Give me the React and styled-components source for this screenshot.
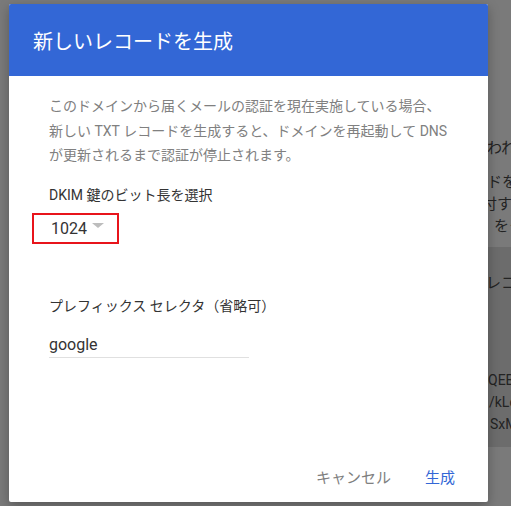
import React from "react";
import styled, { createGlobalStyle } from "styled-components";

const Global = createGlobalStyle`
  html, body { margin: 0; padding: 0; }
  body {
    width: 511px;
    height: 506px;
    overflow: hidden;
    font-family: Roboto, "Noto Sans CJK JP", sans-serif;
  }
`;

const Page = styled.div`
  position: relative;
  width: 511px;
  height: 506px;
  background: #ffffff;
  overflow: hidden;
`;

const Backdrop = styled.div`
  display: flex;
  flex-direction: column;
  margin-left: 470px;
  padding-top: 137px;
  color: #4a4a4a;
  font-size: 15px;
  white-space: nowrap;
`;

const BgLine = styled.div`
  line-height: 22px;
  padding-left: ${(p) => p.$indent}px;
`;

const BgParagraph = styled.div`
  margin-top: 12px;
`;

const BgCard = styled.div`
  margin-top: 10px;
  height: 200px;
  box-sizing: border-box;
  padding-top: 25px;
  background: #e2e2e2;
`;

const KeyBlock = styled.div`
  margin-top: 75px;
  font-size: 14px;
  line-height: 17px;
`;

const Overlay = styled.div`
  position: absolute;
  inset: 0;
  display: flex;
  box-sizing: border-box;
  padding: 4px 23px 4px 9px;
  background: rgba(0, 0, 0, 0.52);
`;

const Dialog = styled.div`
  flex: 1;
  display: flex;
  flex-direction: column;
  background: #ffffff;
  border-radius: 2px;
  overflow: hidden;
  box-shadow: 0 4px 12px rgba(0, 0, 0, 0.28);
`;

const Header = styled.div`
  height: 72px;
  flex: none;
  display: flex;
  align-items: center;
  padding: 0 24px;
  background: #3367d6;
  color: #ffffff;
  font-size: 20px;
  font-weight: 400;
`;

const Body = styled.div`
  display: flex;
  flex-direction: column;
  align-items: flex-start;
  padding: 18px 40px 0 40px;
`;

const Description = styled.p`
  margin: 0;
  font-size: 14px;
  line-height: 24.5px;
  color: #808080;
`;

const Label = styled.div`
  margin-top: ${(p) => p.$top}px;
  font-size: 14px;
  line-height: 20px;
  color: #333333;
`;

const Highlight = styled.div`
  margin-top: 8px;
  margin-left: -17px;
  width: 87px;
  height: 31px;
  box-sizing: border-box;
  border: 2px solid #e8141b;
  display: flex;
  align-items: center;
  padding-left: 17px;
`;

const SelectValue = styled.span`
  font-size: 16px;
  color: #333333;
`;

const Caret = styled.span`
  margin-left: 5px;
  margin-bottom: 6px;
  width: 0;
  height: 0;
  border-left: 6px solid transparent;
  border-right: 6px solid transparent;
  border-top: 5px solid #bdbdbd;
`;

const TextInput = styled.input`
  margin-top: 18px;
  width: 200px;
  height: 21px;
  box-sizing: content-box;
  padding: 0 0 2px 0;
  border: none;
  border-bottom: 1px solid #e0e0e0;
  outline: none;
  font-family: Roboto, "Noto Sans CJK JP", sans-serif;
  font-size: 16px;
  color: #333333;
  background: transparent;
`;

const Footer = styled.div`
  margin-top: auto;
  display: flex;
  justify-content: flex-end;
  gap: 18px;
  padding: 0 25px 8px 0;
`;

const Button = styled.button`
  height: 36px;
  padding: 0 8px;
  border: none;
  background: transparent;
  font-family: Roboto, "Noto Sans CJK JP", sans-serif;
  font-size: 15px;
  color: ${(p) => (p.$primary ? "#3367d6" : "#808080")};
  cursor: pointer;
`;

export default function App() {
  return (
    <>
      <Global />
      <Page>
        <Backdrop>
          <BgLine $indent={17}>われています</BgLine>
          <BgParagraph>
            <BgLine $indent={17}>ドを追加</BgLine>
            <BgLine $indent={12}>付すると</BgLine>
            <BgLine $indent={24}>をクリック</BgLine>
          </BgParagraph>
          <BgCard>
            <BgLine $indent={16}>レコード</BgLine>
            <KeyBlock>
              <BgLine $indent={18}>QEBAQUAA</BgLine>
              <BgLine $indent={19}>/kLcWq</BgLine>
              <BgLine $indent={20}>SxMpTe</BgLine>
            </KeyBlock>
          </BgCard>
        </Backdrop>
        <Overlay>
          <Dialog>
            <Header>新しいレコードを生成</Header>
            <Body>
              <Description>
                このドメインから届くメールの認証を現在実施している場合、
                <br />
                新しい TXT レコードを生成すると、ドメインを再起動して DNS
                <br />
                が更新されるまで認証が停止されます。
              </Description>
              <Label $top={17}>DKIM 鍵のビット長を選択</Label>
              <Highlight>
                <SelectValue>1024</SelectValue>
                <Caret />
              </Highlight>
              <Label $top={52}>プレフィックス セレクタ（省略可）</Label>
              <TextInput readOnly defaultValue="google" />
            </Body>
            <Footer>
              <Button>キャンセル</Button>
              <Button $primary>生成</Button>
            </Footer>
          </Dialog>
        </Overlay>
      </Page>
    </>
  );
}
